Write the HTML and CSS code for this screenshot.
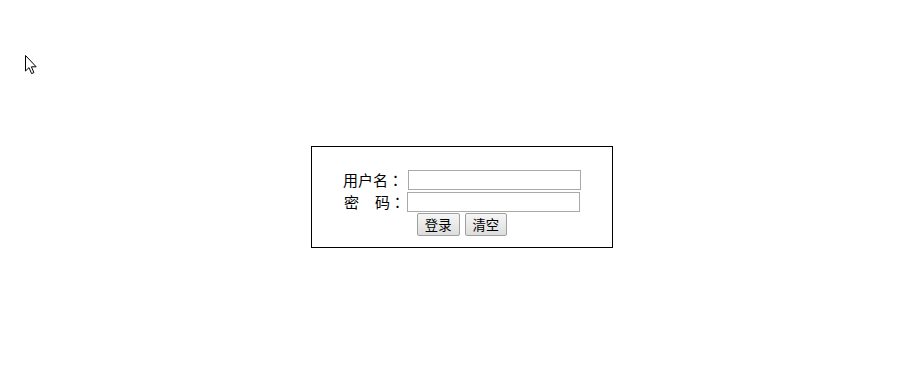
FILE: index.html
```html
<!DOCTYPE html>
<html lang="zh-CN">
<head>
  <meta charset="UTF-8" />
  <title>登录</title>
  <link rel="stylesheet" href="styles.css">
</head>
<body>
  <!-- 鼠标指针 -->
  <svg class="cursor" width="13" height="20" viewBox="0 0 13 20">
    <path d="M0.5 0.5 L0.5 16 L4 12.6 L6.6 18.6 L8.9 17.6 L6.4 11.8 L11.2 11.8 Z" fill="#fff" stroke="#000" stroke-width="1" stroke-linejoin="miter"/>
  </svg>

  <!-- 登录框 -->
  <div class="login-box">
    <form class="login-form">
      <div class="row">
        <label for="username" class="name">用户名<span class="colon" lang="zh-TW">：</span></label>
        <input type="text" id="username" name="username">
      </div>
      <div class="row">
        <label for="password" class="pwd">密<span class="sp"></span>码<span class="colon" lang="zh-TW">：</span></label>
        <input type="password" id="password" name="password">
      </div>
      <div class="row buttons">
        <button type="submit">登录</button>
        <button type="reset">清空</button>
      </div>
    </form>
  </div>
</body>
</html>
```
FILE: styles.css
```css
body {
  margin: 8px;
  font-family: "Noto Sans CJK SC", "Liberation Sans", sans-serif;
  font-size: 15px;
  color: #000;
  background: #fff;
}

.cursor {
  position: absolute;
  left: 25px;
  top: 55px;
}

.login-box {
  width: 300px;
  height: 100px;
  margin: 138px 0 0 303px;
  border: 1px solid #000;
}

.login-form {
  display: flex;
  flex-direction: column;
  align-items: center;
  padding-top: 23px;
  gap: 2px;
}

.row {
  display: flex;
  align-items: center;
  height: 20px;
}

.row label {
  line-height: 20px;
}

.name {
  margin-right: 5px;
}

.pwd {
  margin-right: 2px;
}

.colon {
  font-family: "Noto Sans CJK TC", sans-serif;
}

.sp {
  display: inline-block;
  width: 16px;
}

.row input {
  width: 169px;
  height: 18px;
  padding: 0 1px;
  border: 1px solid #a9a9a9;
  font-size: 13px;
}

.buttons {
  height: 23px;
  gap: 5px;
  margin-top: -1px;
}

.buttons button {
  height: 23px;
  padding: 0 7px;
  border: 1px solid #a0a0a0;
  border-radius: 2px;
  background: linear-gradient(#f6f6f6, #dddddd);
  font-family: "Noto Sans CJK SC", sans-serif;
  font-size: 13.33px;
  color: #000;
}
```
